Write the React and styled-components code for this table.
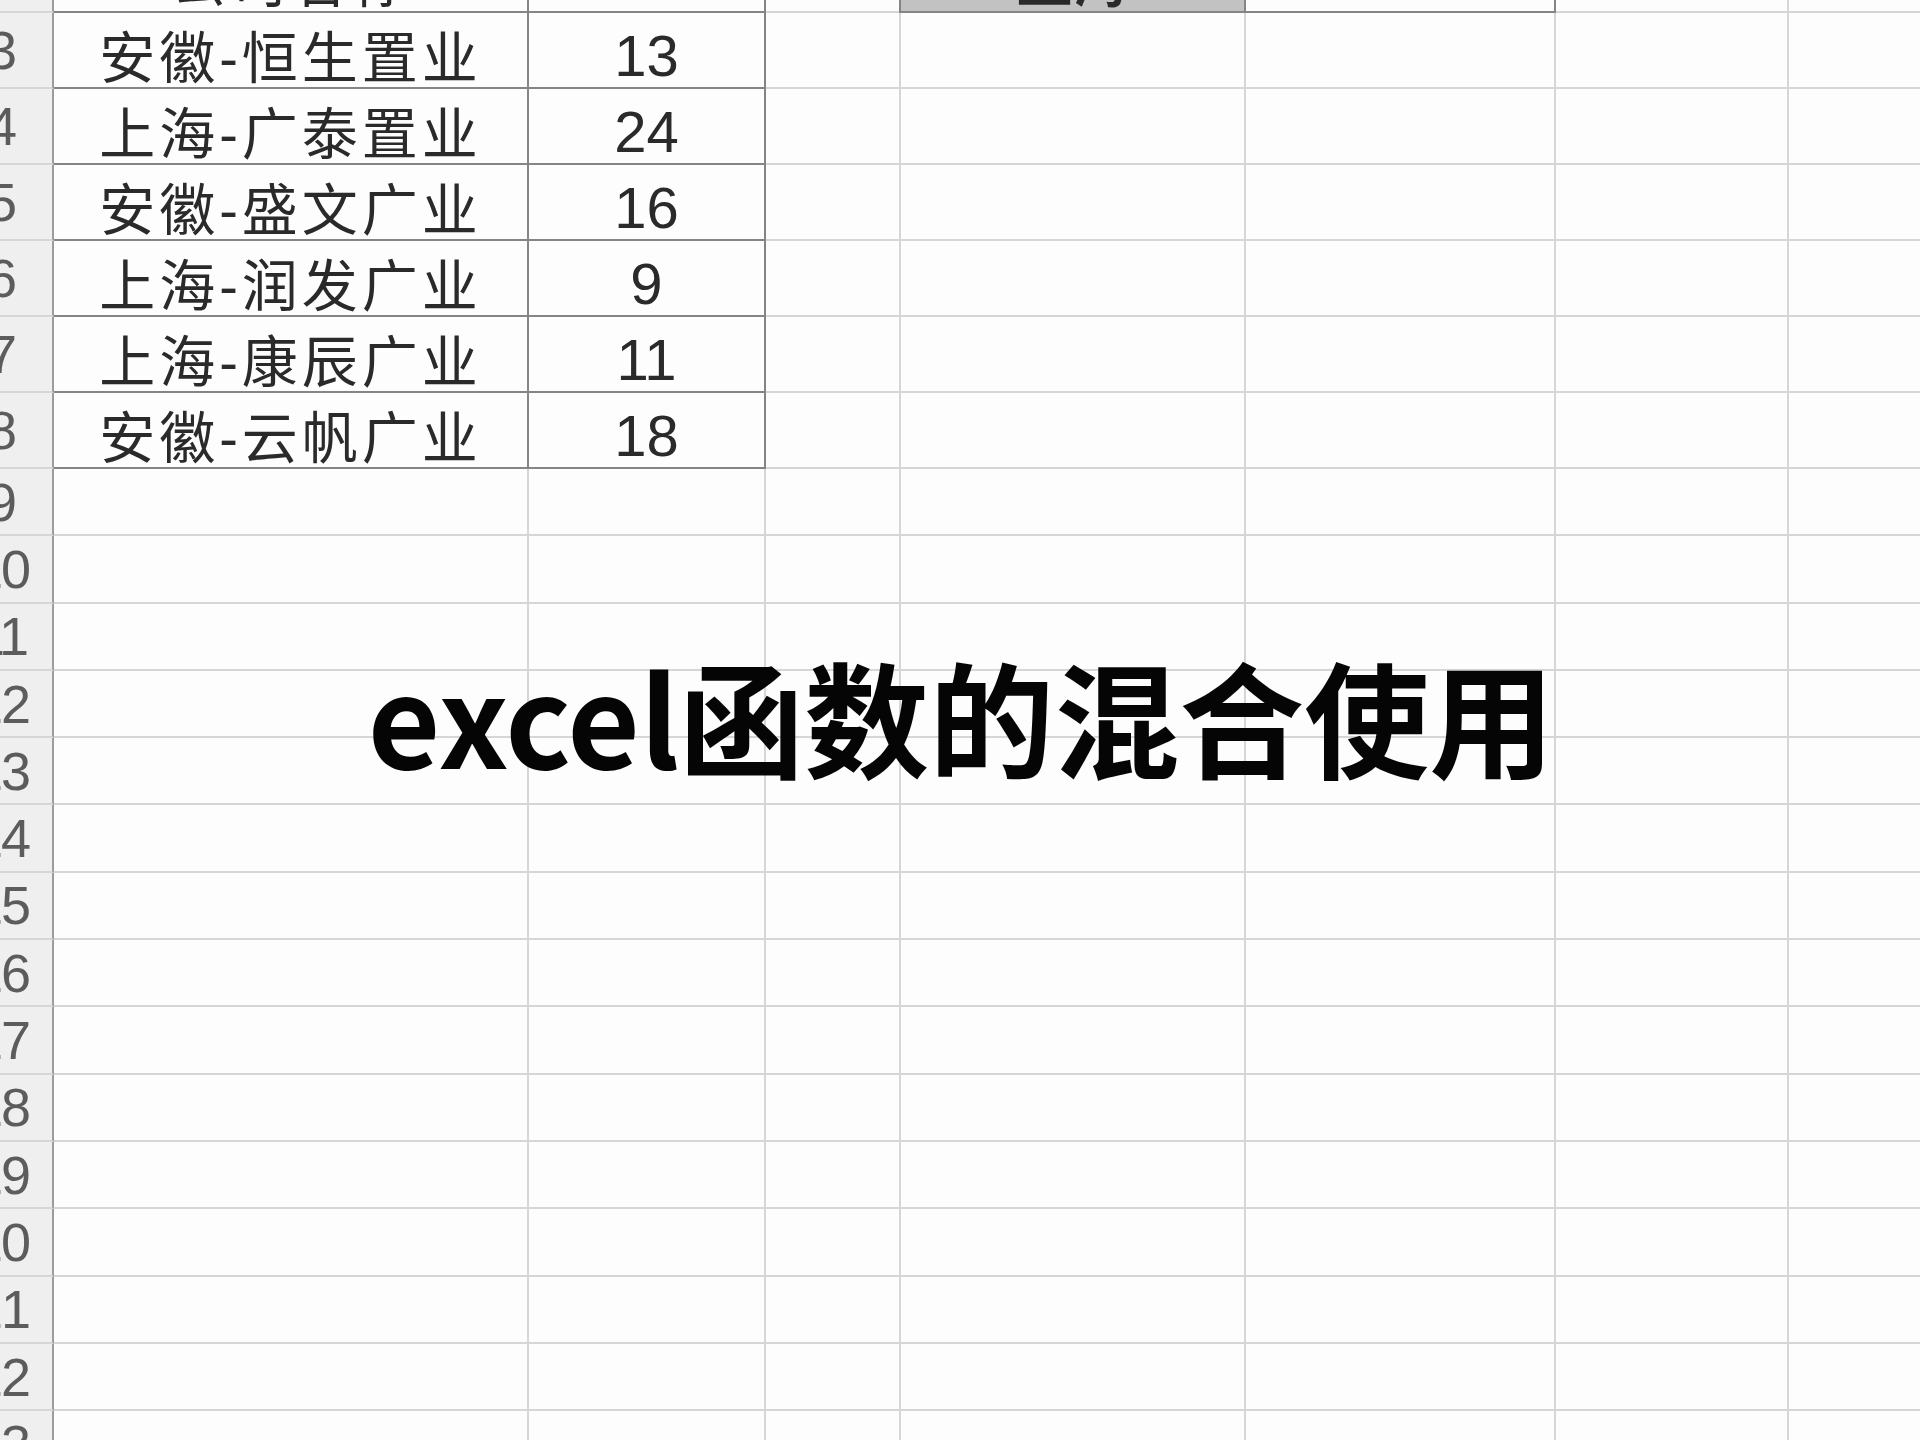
import React from 'react';
import styled, {createGlobalStyle} from 'styled-components';

const GlobalStyle = createGlobalStyle`
  html, body {
    margin: 0;
    padding: 0;
    background: #ffffff;
    overflow: hidden;
  }
`;

/////////////// LAYOUT /////////////
const Page = styled.div`
  position: relative;
  width: 1920px;
  height: 1440px;
  overflow: hidden;
  background: #fdfdfd;
`;

const Sheet = styled.div`
  display: grid;
  grid-template-columns: 104px 475px 237px 135px 345px 310px 233px 240px;
  grid-template-rows: repeat(7, 76px) repeat(15, 67.3px);
  margin: -63px 0 0 -50px;
`;

/////////////// CELLS /////////////
const RowHead = styled.div`
  display: flex;
  align-items: center;
  justify-content: center;
  background: #eeefee;
  border-right: 2px solid #9c9c9c;
  border-bottom: 2px solid #d6d6d6;
  color: #5c5c5c;
  font-family: 'Liberation Sans', 'Noto Sans', sans-serif;
  font-size: 54px;
  letter-spacing: -2px;
`;

const Cell = styled.div`
  display: flex;
  align-items: center;
  justify-content: center;
  padding-top: ${props => (props.num ? '10px' : '6px')};
  box-sizing: border-box;
  background: ${props => props.fill || 'transparent'};
  border-right: 2px solid ${props => (props.boxed ? '#858585' : '#d6d6d6')};
  border-bottom: 2px solid ${props => (props.boxed ? '#858585' : '#d6d6d6')};
  box-shadow: ${props => (props.leftEdge ? '-2px 0 0 #858585' : 'none')};
  color: #2a2a2a;
  font-family: 'Liberation Sans', 'Noto Sans CJK SC', sans-serif;
  font-size: ${props => (props.num ? '58px' : '56px')};
  font-weight: ${props => (props.bold ? 700 : 400)};
  letter-spacing: ${props => (props.bold || props.num ? '0' : '4px')};
  white-space: nowrap;
`;

/////////////// TITLE /////////////
const Caption = styled.div`
  position: absolute;
  left: 0;
  top: 652px;
  width: 100%;
  text-align: center;
  color: #050505;
  font-family: 'Noto Sans CJK SC', 'Noto Sans', sans-serif;
  font-weight: 700;
  font-size: 125px;
  line-height: 1;
  padding-left: 2px;
  box-sizing: border-box;
`;

const companies = [
  ['安徽-恒生置业', 13],
  ['上海-广泰置业', 24],
  ['安徽-盛文广业', 16],
  ['上海-润发广业', 9],
  ['上海-康辰广业', 11],
  ['安徽-云帆广业', 18],
];

const EMPTY_COLS = 7;

const EmptyCells = ({from}) =>
  Array.from({length: EMPTY_COLS - from}, (_, i) => <Cell key={i} />);

export default function App() {
  const rows = [];

  rows.push(
    <React.Fragment key="r2">
      <RowHead>2</RowHead>
      <Cell boxed>公司名称</Cell>
      <Cell boxed />
      <Cell />
      <Cell boxed leftEdge bold fill="#c1c2c1">
        上海
      </Cell>
      <Cell boxed />
      <Cell />
      <Cell />
    </React.Fragment>,
  );

  companies.forEach(([name, count], i) => {
    rows.push(
      <React.Fragment key={'r' + (i + 3)}>
        <RowHead>{i + 3}</RowHead>
        <Cell boxed>{name}</Cell>
        <Cell boxed num>
          {count}
        </Cell>
        <EmptyCells from={2} />
      </React.Fragment>,
    );
  });

  for (let n = 9; n <= 23; n++) {
    rows.push(
      <React.Fragment key={'r' + n}>
        <RowHead>{n}</RowHead>
        <EmptyCells from={0} />
      </React.Fragment>,
    );
  }

  return (
    <Page>
      <GlobalStyle />
      <Sheet>{rows}</Sheet>
      <Caption>excel函数的混合使用</Caption>
    </Page>
  );
}
